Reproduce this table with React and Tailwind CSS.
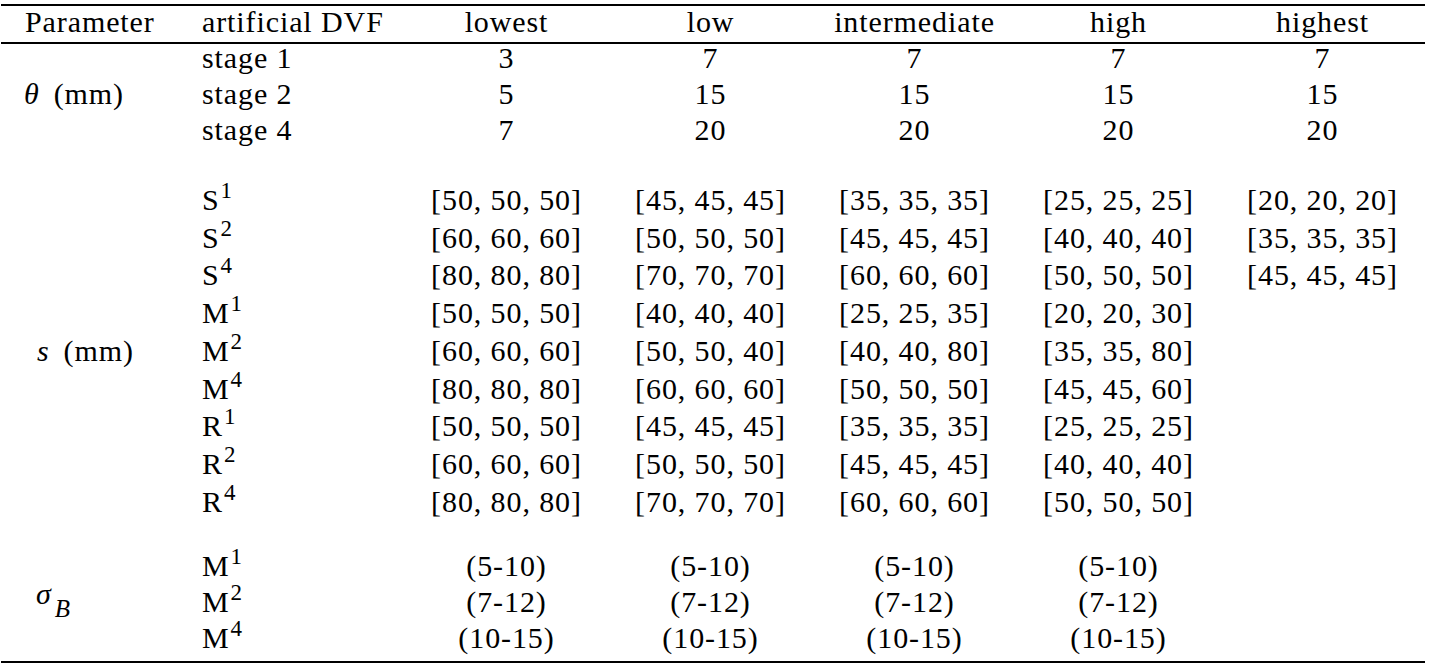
const heads = ["lowest", "low", "intermediate", "high", "highest"];

const thetaRows = [
    ["stage 1", ["3", "7", "7", "7", "7"]],
    ["stage 2", ["5", "15", "15", "15", "15"]],
    ["stage 4", ["7", "20", "20", "20", "20"]],
];

const sRows = [
    ["S", "1", ["[50, 50, 50]", "[45, 45, 45]", "[35, 35, 35]", "[25, 25, 25]", "[20, 20, 20]"]],
    ["S", "2", ["[60, 60, 60]", "[50, 50, 50]", "[45, 45, 45]", "[40, 40, 40]", "[35, 35, 35]"]],
    ["S", "4", ["[80, 80, 80]", "[70, 70, 70]", "[60, 60, 60]", "[50, 50, 50]", "[45, 45, 45]"]],
    ["M", "1", ["[50, 50, 50]", "[40, 40, 40]", "[25, 25, 35]", "[20, 20, 30]", ""]],
    ["M", "2", ["[60, 60, 60]", "[50, 50, 40]", "[40, 40, 80]", "[35, 35, 80]", ""]],
    ["M", "4", ["[80, 80, 80]", "[60, 60, 60]", "[50, 50, 50]", "[45, 45, 60]", ""]],
    ["R", "1", ["[50, 50, 50]", "[45, 45, 45]", "[35, 35, 35]", "[25, 25, 25]", ""]],
    ["R", "2", ["[60, 60, 60]", "[50, 50, 50]", "[45, 45, 45]", "[40, 40, 40]", ""]],
    ["R", "4", ["[80, 80, 80]", "[70, 70, 70]", "[60, 60, 60]", "[50, 50, 50]", ""]],
];

const sigmaRows = [
    ["M", "1", ["(5-10)", "(5-10)", "(5-10)", "(5-10)", ""]],
    ["M", "2", ["(7-12)", "(7-12)", "(7-12)", "(7-12)", ""]],
    ["M", "4", ["(10-15)", "(10-15)", "(10-15)", "(10-15)", ""]],
];

// one table line: label | sub-label | five values
const Row = ({ h, label, sub, values }) => (
    <div className={`grid grid-cols-[198px_205.5px_repeat(5,204px)] leading-[28px] ${h}`}>
        <div className="whitespace-nowrap">{label}</div>
        <div className="pl-[3px] whitespace-nowrap">{sub}</div>
        {values.map((v, i) => (
            <div key={i} className="text-center whitespace-nowrap">{v}</div>
        ))}
    </div>
);

const Sym = ({ letter, sup }) => (
    <span>
        {letter}
        <span className="relative -top-[12px] text-[23px] ml-[1px]">{sup}</span>
    </span>
);

export default function App() {
    return (
        <div className="w-[1432px] h-[669px] bg-white text-black font-['Liberation_Serif'] text-[30px] tracking-[0.9px] pt-[4px]">
            <div className="ml-[1px] w-[1424px]">
                {/* top rule */}
                <div className="h-[2px] bg-black"></div>

                {/* header */}
                <div className="grid grid-cols-[198px_205.5px_repeat(5,204px)] h-[36px] leading-[31px]">
                    <div className="pl-[24px]">Parameter</div>
                    <div className="pl-[3px]">artificial DVF</div>
                    {heads.map((t) => (
                        <div key={t} className="text-center">{t}</div>
                    ))}
                </div>
                <div className="h-[1.5px] bg-black"></div>

                {/* theta */}
                {thetaRows.map(([sub, vals], i) => (
                    <Row
                        key={sub}
                        h="h-[36px]"
                        label={i === 1 ? <span className="pl-[23px]"><i>θ</i><span className="ml-[14px]">(mm)</span></span> : null}
                        sub={sub}
                        values={vals}
                    />
                ))}
                <div className="h-[34.4px]"></div>

                {/* s */}
                {sRows.map(([l, n, vals], i) => (
                    <Row
                        key={l + n}
                        h="h-[37.75px]"
                        label={i === 4 ? <span className="pl-[36px]"><i>s</i><span className="ml-[14px]">(mm)</span></span> : null}
                        sub={<Sym letter={l} sup={n} />}
                        values={vals}
                    />
                ))}
                <div className="h-[26.25px]"></div>

                {/* sigma */}
                {sigmaRows.map(([l, n, vals], i) => (
                    <Row
                        key={l + n}
                        h={i === 2 ? "h-[37.1px]" : "h-[36px]"}
                        label={i === 1 ? (
                            <span className="pl-[35px]">
                                <i className="relative -top-[8px]">σ</i>
                                <i className="relative top-[5px] text-[25px] ml-[3px]">B</i>
                            </span>
                        ) : null}
                        sub={<Sym letter={l} sup={n} />}
                        values={vals}
                    />
                ))}

                {/* bottom rule */}
                <div className="h-[2px] bg-black"></div>
            </div>
        </div>
    );
}
